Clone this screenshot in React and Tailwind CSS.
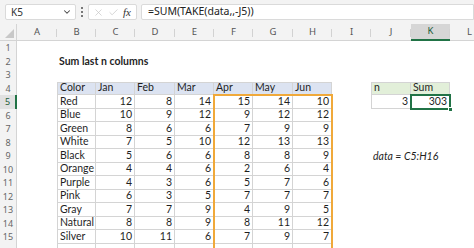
import React from 'react';
import { ChevronDown, X, Check } from 'lucide-react';

const COLS = ['A', 'B', 'C', 'D', 'E', 'F', 'G', 'H', 'I', 'J', 'K', 'L'];

const table = [
  ['Color', 'Jan', 'Feb', 'Mar', 'Apr', 'May', 'Jun'],
  ['Red', 12, 8, 14, 15, 14, 10],
  ['Blue', 10, 9, 12, 9, 12, 12],
  ['Green', 8, 6, 6, 7, 9, 9],
  ['White', 7, 5, 10, 12, 13, 13],
  ['Black', 5, 6, 6, 8, 8, 9],
  ['Orange', 4, 4, 6, 2, 6, 4],
  ['Purple', 4, 3, 6, 5, 7, 6],
  ['Pink', 6, 3, 5, 7, 7, 7],
  ['Gray', 7, 7, 9, 4, 9, 5],
  ['Natural', 8, 8, 9, 8, 11, 12],
  ['Silver', 10, 11, 6, 7, 9, 7],
  ['', '', '', '', '', '', ''],
];

function cellInfo(r, c) {
  // r = sheet row (1..16), c = column index (0 = A)
  if (r >= 4 && c >= 1 && c <= 7) {
    const v = table[r - 4][c - 1];
    return { v, box: true, head: r === 4 ? 'blue' : null, top: r === 4, left: c === 1 };
  }
  if ((r === 4 || r === 5) && (c === 9 || c === 10)) {
    const v = r === 4 ? (c === 9 ? 'n' : 'Sum') : (c === 9 ? 3 : 303);
    return { v, box: true, head: r === 4 ? 'green' : null, top: r === 4, left: c === 9 };
  }
  if (r === 2 && c === 1) return { v: 'Sum last n columns', bold: true };
  if (r === 9 && c === 9) return { v: 'data = C5:H16', italic: true };
  return { v: '' };
}

function Cell({ r, c }) {
  const info = cellInfo(r, c);
  const num = typeof info.v === 'number';
  let cls = 'relative flex items-end pb-[1px] text-[10.5px] leading-[12px] text-[#1f1f1f] whitespace-nowrap';
  if (info.box) {
    cls += ' border-r border-b border-[#d4d4d4] overflow-hidden';
    if (info.top) cls += ' border-t';
    if (info.left) cls += ' border-l';
  }
  if (info.head === 'blue') cls += ' bg-[#dce3f1]';
  if (info.head === 'green') cls += ' bg-[#e2efd9]';
  cls += num ? ' justify-end pr-[2px]' : ' pl-[2px]';
  if (info.bold) cls += ' font-bold';
  if (info.italic) cls += ' italic';
  return <div className={cls}>{info.v}</div>;
}

export default function App() {
  const rows = Array.from({ length: 16 }, (_, i) => i + 1);

  return (
    <div className="w-[474px] h-[248px] overflow-hidden bg-white flex flex-col" style={{ fontFamily: 'Lato, "Noto Sans", sans-serif' }}>
      {/* formula bar */}
      <div className="h-[24px] shrink-0 bg-[#f3f3f3] flex items-start pt-[4px] pl-[5px]">
        <div className="w-[71px] h-[16px] bg-white border border-[#dadada] rounded-[2px] flex items-center pl-[5px] pr-[3px] text-[10px] text-[#333]" style={{ fontFamily: '"Noto Sans", sans-serif' }}>
          <span>K5</span>
          <ChevronDown size={10} strokeWidth={2.5} className="ml-auto text-[#444]" />
        </div>
        <div className="w-[12px] h-[16px] flex flex-col items-center justify-center gap-[2px]">
          <div className="w-[2px] h-[2px] bg-[#777]" />
          <div className="w-[2px] h-[2px] bg-[#777]" />
          <div className="w-[2px] h-[2px] bg-[#777]" />
        </div>
        <div className="w-[49px] h-[16px] bg-white border border-[#dadada] rounded-[2px] flex items-center pl-[4px] gap-[4px]">
          <X size={11} strokeWidth={1.5} className="text-[#c4c4c4]" />
          <Check size={11} strokeWidth={1.5} className="text-[#c4c4c4]" />
          <span className="text-[11px] italic text-[#333] leading-none" style={{ fontFamily: '"Liberation Serif", serif' }}>fx</span>
        </div>
        <div className="ml-[4px] flex-1 h-[16px] bg-white border border-[#dadada] rounded-l-[2px] flex items-center pl-[6px] text-[10.5px] text-[#222]" style={{ fontFamily: '"Noto Sans", sans-serif' }}>
          =SUM(TAKE(data,,-J5))
        </div>
      </div>

      {/* sheet grid */}
      <div className="relative grid grid-cols-[17px_40px_39px_39px_40px_39px_39px_40px_39px_39px_40px_39px_39px] grid-rows-[17px_14px_13px_14px_13px_14px_13px_14px_13px_14px_13px_14px_13px_14px_13px_14px_13px]">
        {/* corner */}
        <div className="bg-[#f3f3f3] border-b border-r border-[#d4d4d4] flex items-end justify-end pr-[2px] pb-[2px]">
          <svg width="9" height="9" viewBox="0 0 9 9"><path d="M9 0 L9 9 L0 9 Z" fill="#c8c8c8" /></svg>
        </div>
        {COLS.map((l) => (
          <div
            key={l}
            className={
              l === 'K'
                ? 'relative bg-[#d6d6d6] border-b-2 border-[#217346] flex items-center justify-center text-[9.5px] text-[#1e5e3a]'
                : 'relative bg-[#f3f3f3] border-b border-[#d4d4d4] flex items-center justify-center text-[9.5px] text-[#555]'
            }
            style={{ fontFamily: '"Noto Sans", sans-serif' }}
          >
            {l}
            <span className="absolute right-0 top-[5px] h-[8px] w-px bg-[#d2d2d2]" />
          </div>
        ))}

        {rows.map((r) => (
          <React.Fragment key={r}>
            <div
              className={
                r === 5
                  ? 'bg-[#e1e1e1] border-r-2 border-[#217346] flex items-center justify-center text-[9px] text-[#1e5e3a]'
                  : 'bg-[#f3f3f3] border-r border-[#d4d4d4] flex items-center justify-center text-[9px] text-[#666]'
              }
              style={{ fontFamily: '"Noto Sans", sans-serif' }}
            >
              {r < 16 ? r : ''}
            </div>
            {COLS.map((l, c) => (
              <Cell key={l} r={r} c={c} />
            ))}
          </React.Fragment>
        ))}

        {/* data range highlight F5:H16 */}
        <div className="absolute col-start-7 col-end-10 row-start-6 row-end-18 -inset-px border-2 border-[#f0a93a] pointer-events-none" />
        {/* active cell K5 */}
        <div className="absolute col-start-12 col-end-13 row-start-6 row-end-7 -inset-px border-2 border-[#217346] pointer-events-none">
          <div className="absolute -right-[4px] -bottom-[4px] w-[5px] h-[5px] bg-[#217346] border border-white" />
        </div>
      </div>
    </div>
  );
}
